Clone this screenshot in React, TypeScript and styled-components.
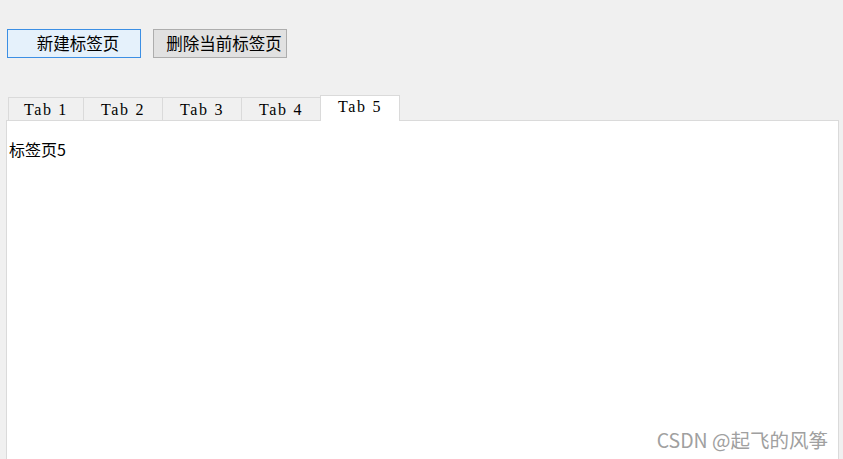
import React, {useState} from 'react';
import styled, {createGlobalStyle, css} from 'styled-components';

const GlobalStyle = createGlobalStyle`
    html, body {
        margin: 0;
        padding: 0;
        background: #f0f0f0;
    }
`;

const cjk = `"Noto Sans CJK SC", "Noto Sans", sans-serif`;

const Window = styled.div`
    position: relative;
    height: 459px;
    overflow: hidden;
    padding: 29px 5px 0 6px;
    box-sizing: border-box;
    background: #f0f0f0;
    font-family: ${cjk};
`;

const ButtonRow = styled.div`
    display: flex;
    gap: 12px;
    margin-left: 1px;
`;

const PushButton = styled.button<{$focused?: boolean}>`
    box-sizing: border-box;
    width: 134px;
    height: 29px;
    padding: 0 0 0 8px;
    font-family: ${cjk};
    font-size: 16.5px;
    line-height: 27px;
    color: #000;
    white-space: nowrap;
    overflow: hidden;
    ${({$focused}) =>
        $focused
            ? css`
                  background: #e5f1fb;
                  border: 1px solid #3c8fe4;
              `
            : css`
                  background: #e1e1e1;
                  border: 1px solid #adadad;
              `}
`;

const TabWidget = styled.div`
    margin-top: 37px;
`;

const TabBar = styled.div`
    display: flex;
    align-items: flex-end;
    margin-left: 2px;
    height: 25px;
`;

const Tab = styled.div<{$active?: boolean}>`
    box-sizing: border-box;
    height: 23px;
    padding: 0 17px;
    margin-left: -1px;
    border: 1px solid #dadada;
    border-bottom: none;
    background: #f0f0f0;
    font-family: "Liberation Serif", "DejaVu Serif", serif;
    font-size: 16px;
    letter-spacing: 1.65px;
    line-height: 23px;
    color: #000;
    cursor: default;
    &:first-child {
        margin-left: 0;
        padding: 0 15px;
    }
    ${({$active}) =>
        $active &&
        css`
            position: relative;
            z-index: 1;
            height: 26px;
            margin-bottom: -1px;
            background: #ffffff;
            line-height: 21px;
        `}
`;

const Page = styled.div`
    box-sizing: border-box;
    width: 833px;
    height: 400px;
    padding: 16px 2px;
    background: #ffffff;
    border: 1px solid #dadada;
    font-family: ${cjk};
    font-size: 16px;
    line-height: 24px;
    color: #000;
`;

const Watermark = styled.div`
    position: absolute;
    right: 15px;
    top: 425px;
    font-family: ${cjk};
    font-size: 19.5px;
    color: #a0a0a0;
    white-space: nowrap;
`;

export default function App() {
    const [tabs] = useState([1, 2, 3, 4, 5]);
    const [current, setCurrent] = useState(5);

    return (
        <>
            <GlobalStyle />
            <Window>
                <ButtonRow>
                    <PushButton $focused>新建标签页</PushButton>
                    <PushButton>删除当前标签页</PushButton>
                </ButtonRow>
                <TabWidget>
                    <TabBar>
                        {tabs.map((n) => (
                            <Tab key={n} $active={n === current} onClick={() => setCurrent(n)}>
                                Tab {n}
                            </Tab>
                        ))}
                    </TabBar>
                    <Page>标签页{current}</Page>
                </TabWidget>
                <Watermark>CSDN @起飞的风筝</Watermark>
            </Window>
        </>
    );
}
